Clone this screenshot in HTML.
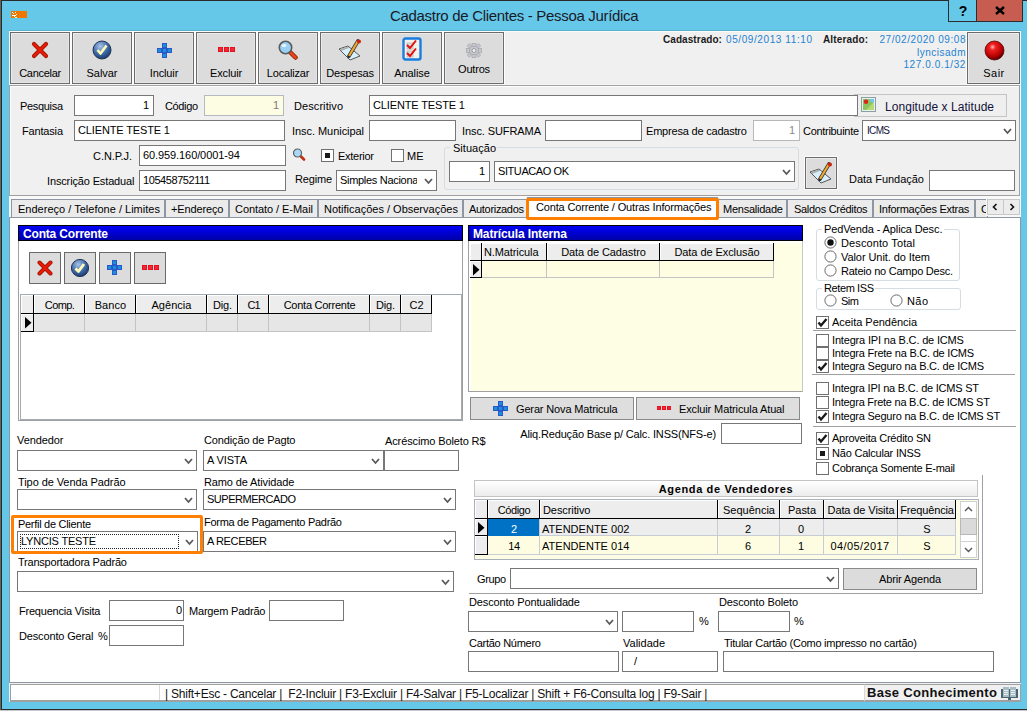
<!DOCTYPE html>
<html><head><meta charset="utf-8"><style>
html,body{margin:0;padding:0;width:1027px;height:711px;overflow:hidden;position:relative;font-family:"Liberation Sans",sans-serif}
body>div{position:absolute;box-sizing:border-box}
.t{position:absolute;white-space:pre}
</style></head><body>
<div style="left:0px;top:0px;width:1027px;height:711px;background:#3a3a3a"></div>
<div style="left:0px;top:0px;width:1px;height:711px;background:#5a6a60"></div>
<div style="left:1px;top:0px;width:1026px;height:710px;background:#2a2a2a"></div>
<div style="left:2px;top:1px;width:1025px;height:708px;background:#65c8e8"></div>
<div style="left:0px;top:710px;width:1027px;height:1px;background:#c8c8c8"></div>
<div style="left:11px;top:11px;width:16px;height:7px;background:#f07800"></div>
<svg style="position:absolute;left:11px;top:11px" width="8" height="8"><g fill="#fff"><rect x="1" y="1" width="1" height="1"/><rect x="2" y="2" width="1" height="1"/><rect x="4" y="1" width="1" height="1"/><rect x="1" y="4" width="2" height="1"/><rect x="3" y="4" width="2" height="1"/><rect x="3" y="5" width="1" height="1"/><rect x="5" y="3" width="1" height="1"/><rect x="4" y="6" width="2" height="1"/></g></svg>
<span id="t1" class="t" style="left:390px;top:7px;font-size:15px;line-height:17px;font-weight:400;color:#1a1a28;font-family:'Liberation Sans';letter-spacing:-0.31px;">Cadastro de Clientes - Pessoa Jurídica</span>
<div style="left:948px;top:0px;width:29px;height:22px;background:#65c8e8;border:1px solid #2c2c2c;border-top:0;box-sizing:border-box"></div>
<div style="left:976px;top:0px;width:47px;height:22px;background:#c75c50;border:1px solid #2c2c2c;border-top:0;box-sizing:border-box"></div>
<span id="t2" class="t" style="left:963px;transform:translateX(-50%);top:3px;font-size:14px;line-height:16px;font-weight:700;color:#000;font-family:'Liberation Sans';">?</span>
<svg style="position:absolute;left:995px;top:6px" width="10" height="9"><path d="M1 1 L9 8 M9 1 L1 8" stroke="#000" stroke-width="2.4"/></svg>
<div style="left:9px;top:30px;width:1012px;height:672px;background:#f0f0f0"></div>
<div style="left:9px;top:30px;width:1012px;height:1px;background:#5bb0cc"></div>
<div style="left:9px;top:31px;width:1012px;height:1px;background:#fbfbfb"></div>
<div style="left:9px;top:31px;width:62px;height:54px;background:#fdfdfd"></div>
<div style="left:10px;top:32px;width:60px;height:52px;background:#dcdcdc;border:1px solid #6b6b6b;box-sizing:border-box;box-shadow:inset 1px 1px 0 #ececec, inset -1px -1px 0 #e6e6e6"></div>
<span id="t3" class="t" style="left:40px;transform:translateX(-50%);top:67px;font-size:11px;line-height:13px;font-weight:400;color:#000;font-family:'Liberation Sans';letter-spacing:-0.29px;">Cancelar</span>
<div style="left:71px;top:31px;width:62px;height:54px;background:#fdfdfd"></div>
<div style="left:72px;top:32px;width:60px;height:52px;background:#dcdcdc;border:1px solid #6b6b6b;box-sizing:border-box;box-shadow:inset 1px 1px 0 #ececec, inset -1px -1px 0 #e6e6e6"></div>
<span id="t4" class="t" style="left:102px;transform:translateX(-50%);top:67px;font-size:11px;line-height:13px;font-weight:400;color:#000;font-family:'Liberation Sans';letter-spacing:-0.04px;">Salvar</span>
<div style="left:133px;top:31px;width:62px;height:54px;background:#fdfdfd"></div>
<div style="left:134px;top:32px;width:60px;height:52px;background:#dcdcdc;border:1px solid #6b6b6b;box-sizing:border-box;box-shadow:inset 1px 1px 0 #ececec, inset -1px -1px 0 #e6e6e6"></div>
<span id="t5" class="t" style="left:164px;transform:translateX(-50%);top:67px;font-size:11px;line-height:13px;font-weight:400;color:#000;font-family:'Liberation Sans';letter-spacing:-0.14px;">Incluir</span>
<div style="left:195px;top:31px;width:62px;height:54px;background:#fdfdfd"></div>
<div style="left:196px;top:32px;width:60px;height:52px;background:#dcdcdc;border:1px solid #6b6b6b;box-sizing:border-box;box-shadow:inset 1px 1px 0 #ececec, inset -1px -1px 0 #e6e6e6"></div>
<span id="t6" class="t" style="left:226px;transform:translateX(-50%);top:67px;font-size:11px;line-height:13px;font-weight:400;color:#000;font-family:'Liberation Sans';letter-spacing:-0.17px;">Excluir</span>
<div style="left:257px;top:31px;width:62px;height:54px;background:#fdfdfd"></div>
<div style="left:258px;top:32px;width:60px;height:52px;background:#dcdcdc;border:1px solid #6b6b6b;box-sizing:border-box;box-shadow:inset 1px 1px 0 #ececec, inset -1px -1px 0 #e6e6e6"></div>
<span id="t7" class="t" style="left:288px;transform:translateX(-50%);top:67px;font-size:11px;line-height:13px;font-weight:400;color:#000;font-family:'Liberation Sans';letter-spacing:-0.18px;">Localizar</span>
<div style="left:319px;top:31px;width:62px;height:54px;background:#fdfdfd"></div>
<div style="left:320px;top:32px;width:60px;height:52px;background:#dcdcdc;border:1px solid #6b6b6b;box-sizing:border-box;box-shadow:inset 1px 1px 0 #ececec, inset -1px -1px 0 #e6e6e6"></div>
<span id="t8" class="t" style="left:350px;transform:translateX(-50%);top:67px;font-size:11px;line-height:13px;font-weight:400;color:#000;font-family:'Liberation Sans';letter-spacing:-0.19px;">Despesas</span>
<div style="left:381px;top:31px;width:62px;height:54px;background:#fdfdfd"></div>
<div style="left:382px;top:32px;width:60px;height:52px;background:#dcdcdc;border:1px solid #6b6b6b;box-sizing:border-box;box-shadow:inset 1px 1px 0 #ececec, inset -1px -1px 0 #e6e6e6"></div>
<span id="t9" class="t" style="left:412px;transform:translateX(-50%);top:67px;font-size:11px;line-height:13px;font-weight:400;color:#000;font-family:'Liberation Sans';letter-spacing:-0.05px;">Analise</span>
<div style="left:443px;top:31px;width:62px;height:54px;background:#fdfdfd"></div>
<div style="left:444px;top:32px;width:60px;height:52px;background:#dcdcdc;border:1px solid #6b6b6b;box-sizing:border-box;box-shadow:inset 1px 1px 0 #ececec, inset -1px -1px 0 #e6e6e6"></div>
<span id="t10" class="t" style="left:474px;transform:translateX(-50%);top:63px;font-size:11px;line-height:13px;font-weight:400;color:#000;font-family:'Liberation Sans';letter-spacing:-0.20px;">Outros</span>
<div style="left:9px;top:84px;width:1012px;height:1px;background:#f6f6f6"></div>
<svg style="position:absolute;left:31px;top:41px" width="18" height="18"><path d="M3 3 L15 15 M15 3 L3 15" stroke="#a01800" stroke-width="4.2" stroke-linecap="round"/><path d="M3 3 L15 15 M15 3 L3 15" stroke="#ee1a08" stroke-width="2.4" stroke-linecap="round"/></svg>
<svg style="position:absolute;left:92px;top:40px" width="20" height="20"><defs><radialGradient id="gch" cx="40%" cy="30%" r="70%"><stop offset="0" stop-color="#a8c4e8"/><stop offset="0.6" stop-color="#3e6aa8"/><stop offset="1" stop-color="#1c3c70"/></radialGradient></defs><circle cx="10" cy="10" r="9" fill="url(#gch)" stroke="#223355" stroke-width="1"/><path d="M5.5 10 L8.5 13.5 L14.5 5.5" stroke="#fffbb8" stroke-width="2.6" fill="none" stroke-linejoin="round"/></svg>
<svg style="position:absolute;left:157px;top:43px" width="15" height="15"><rect x="5.5" y="0.5" width="4" height="4" fill="#1a90dc" stroke="#2a58c8" stroke-width="1"/><rect x="0.5" y="5.5" width="4" height="4" fill="#1a90dc" stroke="#2a58c8" stroke-width="1"/><rect x="5.5" y="5.5" width="4" height="4" fill="#1a90dc" stroke="#2a58c8" stroke-width="1"/><rect x="10.5" y="5.5" width="4" height="4" fill="#1a90dc" stroke="#2a58c8" stroke-width="1"/><rect x="5.5" y="10.5" width="4" height="4" fill="#1a90dc" stroke="#2a58c8" stroke-width="1"/></svg>
<svg style="position:absolute;left:218px;top:47px" width="18" height="5"><rect x="0" y="0" width="5" height="5" fill="#e8101c"/><rect x="1" y="1" width="3" height="3" fill="#f02838"/><rect x="6" y="0" width="5" height="5" fill="#e8101c"/><rect x="7" y="1" width="3" height="3" fill="#f02838"/><rect x="12" y="0" width="5" height="5" fill="#e8101c"/><rect x="13" y="1" width="3" height="3" fill="#f02838"/></svg>
<svg style="position:absolute;left:277px;top:40px" width="22" height="20"><path d="M13.5 12.5 L18.5 17.5" stroke="#8a2000" stroke-width="4.5" stroke-linecap="round"/><path d="M13.5 12.5 L18.5 17.5" stroke="#e84818" stroke-width="2.8" stroke-linecap="round"/><circle cx="8.5" cy="7.5" r="6.2" fill="#9ad0f4" stroke="#5a5a5a" stroke-width="1.6"/><ellipse cx="7" cy="5.5" rx="2.5" ry="1.5" fill="#e8f6ff"/></svg>
<svg style="position:absolute;left:338px;top:39px" width="24" height="22" viewBox="0 0 24 22"><path d="M1 10 L10 7 L22 17 L12 21 Z" fill="#d8f0fc" stroke="#555" stroke-width="1"/><path d="M2 10 L10 7.5 L11 9 L3 12 Z" fill="#b0b0b0"/><path d="M20 2 L11 17" stroke="#333" stroke-width="3.6" stroke-linecap="round"/><path d="M20 2 L11 17" stroke="#f0a830" stroke-width="2.2"/><circle cx="21" cy="2.5" r="2" fill="#d02010"/><path d="M10.5 16.5 L9.5 19.5 L12 17.5Z" fill="#222"/></svg>
<svg style="position:absolute;left:402px;top:37px" width="21" height="25"><rect x="1.5" y="1.5" width="17" height="21" rx="2" fill="#f4f0ec" stroke="#1a7ee0" stroke-width="2.4"/><rect x="5" y="6" width="6" height="6" fill="#ddd" stroke="#aaa" stroke-width="0.6"/><rect x="5" y="14" width="6" height="6" fill="#ddd" stroke="#aaa" stroke-width="0.6"/><path d="M5 8 L8 11 L14 3.5" stroke="#e01010" stroke-width="2" fill="none"/><path d="M5 16 L8 19 L14 11.5" stroke="#e01010" stroke-width="2" fill="none"/></svg>
<svg style="position:absolute;left:466px;top:43px" width="16" height="15"><g fill="#c8c8d0" stroke="#a8a8b0" stroke-width="0.8"><circle cx="8" cy="7.5" r="4.5"/><rect x="6" y="0.5" width="4" height="3"/><rect x="6" y="11.5" width="4" height="3"/><rect x="0.5" y="5.5" width="3" height="4"/><rect x="12.5" y="5.5" width="3" height="4"/><rect x="1.8" y="1.3" width="3" height="3" transform="rotate(45 3.3 2.8)"/><rect x="11" y="1.3" width="3" height="3" transform="rotate(45 12.5 2.8)"/><rect x="1.8" y="10.5" width="3" height="3" transform="rotate(45 3.3 12)"/><rect x="11" y="10.5" width="3" height="3" transform="rotate(45 12.5 12)"/></g><circle cx="8" cy="7.5" r="2" fill="#f0f0f0" stroke="#888" stroke-width="0.8"/></svg>
<span id="t11" class="t" style="left:663px;top:34px;font-size:10px;line-height:12px;font-weight:700;color:#1a1a1a;font-family:'Liberation Sans';letter-spacing:0.06px;">Cadastrado:</span>
<span id="t12" class="t" style="left:726px;top:34px;font-size:10px;line-height:12px;font-weight:400;color:#1e82d2;font-family:'Liberation Sans';letter-spacing:0.59px;">05/09/2013 11:10</span>
<span id="t13" class="t" style="left:823px;top:34px;font-size:10px;line-height:12px;font-weight:700;color:#1a1a1a;font-family:'Liberation Sans';letter-spacing:0.14px;">Alterado:</span>
<span id="t14" class="t" style="right:61px;top:34px;font-size:10px;line-height:12px;font-weight:400;color:#1e82d2;font-family:'Liberation Sans';letter-spacing:0.54px;">27/02/2020 09:08</span>
<span id="t15" class="t" style="right:61px;top:47px;font-size:10px;line-height:12px;font-weight:400;color:#1e82d2;font-family:'Liberation Sans';letter-spacing:0.50px;">lyncisadm</span>
<span id="t16" class="t" style="right:61px;top:59px;font-size:10px;line-height:12px;font-weight:400;color:#1e82d2;font-family:'Liberation Sans';letter-spacing:0.58px;">127.0.0.1/32</span>
<div style="left:966px;top:31px;width:55px;height:54px;background:#fdfdfd"></div>
<div style="left:967px;top:32px;width:53px;height:52px;background:#dcdcdc;border:1px solid #6b6b6b;box-sizing:border-box;box-shadow:inset 1px 1px 0 #ececec, inset -1px -1px 0 #e6e6e6"></div>
<svg style="position:absolute;left:984px;top:40px" width="21" height="21"><defs><radialGradient id="gred" cx="40%" cy="32%" r="65%"><stop offset="0" stop-color="#ffb8b8"/><stop offset="0.25" stop-color="#f02020"/><stop offset="0.8" stop-color="#b00000"/><stop offset="1" stop-color="#600000"/></radialGradient></defs><circle cx="10.5" cy="10.5" r="9.5" fill="url(#gred)" stroke="#500" stroke-width="0.8"/></svg>
<span id="t17" class="t" style="left:994px;transform:translateX(-50%);top:67px;font-size:11px;line-height:13px;font-weight:400;color:#000;font-family:'Liberation Sans';letter-spacing:0.48px;">Sair</span>
<div style="left:9px;top:85px;width:1011px;height:111px;background:#f0f0f0;border-left:1px solid #a0a0a0;border-bottom:1px solid #a0a0a0;border-right:1px solid #a0a0a0;border-top:1px solid #a0a0a0;box-shadow:inset 1px 1px 0 #fff"></div>
<div style="left:1020px;top:85px;width:1px;height:111px;background:#fff"></div>
<span id="t18" class="t" style="left:20px;top:100px;font-size:11px;line-height:13px;font-weight:400;color:#000;font-family:'Liberation Sans';letter-spacing:-0.32px;">Pesquisa</span>
<div style="left:74px;top:95px;width:80px;height:21px;background:#fff;border:1px solid #777777"></div>
<span id="t19" class="t" style="right:878px;top:99px;font-size:11px;line-height:13px;font-weight:400;color:#000;font-family:'Liberation Sans';">1</span>
<span id="t20" class="t" style="left:165px;top:100px;font-size:11px;line-height:13px;font-weight:400;color:#000;font-family:'Liberation Sans';letter-spacing:-0.37px;">Código</span>
<div style="left:204px;top:95px;width:80px;height:21px;background:#fdfde3;border:1px solid #b5bac2"></div>
<span id="t21" class="t" style="right:748px;top:99px;font-size:11px;line-height:13px;font-weight:400;color:#7a7a7a;font-family:'Liberation Sans';">1</span>
<span id="t22" class="t" style="left:294px;top:100px;font-size:11px;line-height:13px;font-weight:400;color:#000;font-family:'Liberation Sans';letter-spacing:0.08px;">Descritivo</span>
<div style="left:854px;top:94px;width:153px;height:23px;background:#efefef;border:1px solid #c4c4c4"></div>
<div style="left:369px;top:95px;width:489px;height:21px;background:#fff;border:1px solid #777777"></div>
<span id="t23" class="t" style="left:373px;top:99px;font-size:11px;line-height:13px;font-weight:400;color:#000;font-family:'Liberation Sans';letter-spacing:-0.14px;">CLIENTE TESTE 1</span>
<svg style="position:absolute;left:861px;top:97px" width="15" height="15"><rect x="0.5" y="0.5" width="14" height="14" fill="#e8f0f0" stroke="#8aa0a0"/><rect x="2" y="2" width="11" height="11" fill="#8cc460"/><path d="M8 2 L13 2 L13 8 Z" fill="#70c8f0"/><path d="M5 13 L13 5 L13 13Z" fill="#b8d870"/><circle cx="5" cy="4.8" r="2.2" fill="#e02020"/></svg>
<span id="t24" class="t" style="left:885px;top:100px;font-size:12px;line-height:14px;font-weight:400;color:#14143c;font-family:'Liberation Sans';letter-spacing:0.05px;">Longitude x Latitude</span>
<span id="t25" class="t" style="left:22px;top:125px;font-size:11px;line-height:13px;font-weight:400;color:#000;font-family:'Liberation Sans';letter-spacing:-0.17px;">Fantasia</span>
<div style="left:74px;top:120px;width:211px;height:21px;background:#fff;border:1px solid #777777"></div>
<span id="t26" class="t" style="left:78px;top:124px;font-size:11px;line-height:13px;font-weight:400;color:#000;font-family:'Liberation Sans';letter-spacing:-0.14px;">CLIENTE TESTE 1</span>
<span id="t27" class="t" style="left:292px;top:125px;font-size:11px;line-height:13px;font-weight:400;color:#000;font-family:'Liberation Sans';letter-spacing:-0.05px;">Insc. Municipal</span>
<div style="left:369px;top:120px;width:87px;height:21px;background:#fff;border:1px solid #777777"></div>
<span id="t28" class="t" style="left:462px;top:125px;font-size:11px;line-height:13px;font-weight:400;color:#000;font-family:'Liberation Sans';letter-spacing:-0.09px;">Insc. SUFRAMA</span>
<div style="left:545px;top:120px;width:97px;height:21px;background:#fff;border:1px solid #777777"></div>
<span id="t29" class="t" style="left:646px;top:125px;font-size:11px;line-height:13px;font-weight:400;color:#000;font-family:'Liberation Sans';letter-spacing:-0.20px;">Empresa de cadastro</span>
<div style="left:753px;top:120px;width:47px;height:21px;background:#fff;border:1px solid #b8b8b8"></div>
<span id="t30" class="t" style="right:232px;top:124px;font-size:11px;line-height:13px;font-weight:400;color:#888;font-family:'Liberation Sans';">1</span>
<span id="t31" class="t" style="left:803px;top:125px;font-size:11px;line-height:13px;font-weight:400;color:#000;font-family:'Liberation Sans';letter-spacing:-0.30px;">Contribuinte</span>
<div style="left:862px;top:120px;width:154px;height:21px;background:#fff;border:1px solid #777777"></div>
<svg style="position:absolute;left:1003px;top:128px" width="9" height="7"><path d="M1 1 L4.5 5 L8 1" stroke="#585858" stroke-width="1.8" fill="none"/></svg>
<span id="t32" class="t" style="left:867px;top:125px;font-size:10px;line-height:12px;font-weight:400;color:#101040;font-family:'Liberation Sans';letter-spacing:-0.67px;">ICMS</span>
<span id="t33" class="t" style="right:895px;top:150px;font-size:11px;line-height:13px;font-weight:400;color:#000;font-family:'Liberation Sans';letter-spacing:-0.08px;">C.N.P.J.</span>
<div style="left:139px;top:145px;width:147px;height:21px;background:#fff;border:1px solid #777777"></div>
<span id="t34" class="t" style="left:143px;top:149px;font-size:11px;line-height:13px;font-weight:400;color:#000;font-family:'Liberation Sans';letter-spacing:-0.09px;">60.959.160/0001-94</span>
<svg style="position:absolute;left:292px;top:148px" width="14" height="13"><path d="M8.5 8 L12 11.5" stroke="#c03010" stroke-width="2.6" stroke-linecap="round"/><circle cx="5.5" cy="5" r="4" fill="#a8d8f8" stroke="#606060" stroke-width="1.2"/></svg>
<div style="left:321px;top:149px;width:13px;height:13px;background:#fff;border:1px solid #707070"></div>
<div style="left:325px;top:153px;width:5px;height:5px;background:#1a1a1a"></div>
<span id="t35" class="t" style="left:338px;top:150px;font-size:11px;line-height:13px;font-weight:400;color:#000;font-family:'Liberation Sans';letter-spacing:-0.27px;">Exterior</span>
<div style="left:391px;top:149px;width:13px;height:13px;background:#fff;border:1px solid #707070"></div>
<span id="t36" class="t" style="left:407px;top:150px;font-size:11px;line-height:13px;font-weight:400;color:#000;font-family:'Liberation Sans';letter-spacing:0.00px;">ME</span>
<div style="left:444px;top:147px;width:355px;height:43px;border:1px solid #d5dde3;border-radius:3px"></div>
<div style="left:450px;top:142px;width:47px;height:13px;background:#f0f0f0"></div>
<span id="t37" class="t" style="left:453px;top:142px;font-size:11px;line-height:13px;font-weight:400;color:#000;font-family:'Liberation Sans';letter-spacing:0.03px;">Situação</span>
<div style="left:449px;top:161px;width:41px;height:21px;background:#fff;border:1px solid #777777"></div>
<span id="t38" class="t" style="right:542px;top:165px;font-size:11px;line-height:13px;font-weight:400;color:#000;font-family:'Liberation Sans';">1</span>
<div style="left:494px;top:161px;width:301px;height:21px;background:#fff;border:1px solid #777777"></div>
<span id="t39" class="t" style="left:498px;top:165px;font-size:11px;line-height:13px;font-weight:400;color:#000;font-family:'Liberation Sans';letter-spacing:-0.42px;">SITUACAO OK</span>
<svg style="position:absolute;left:782px;top:169px" width="9" height="7"><path d="M1 1 L4.5 5 L8 1" stroke="#585858" stroke-width="1.8" fill="none"/></svg>
<div style="left:804px;top:156px;width:34px;height:34px;background:#fdfdfd"></div>
<div style="left:805px;top:157px;width:32px;height:32px;background:#dcdcdc;border:1px solid #6b6b6b;box-sizing:border-box;box-shadow:inset 1px 1px 0 #ececec, inset -1px -1px 0 #e6e6e6"></div>
<svg style="position:absolute;left:809px;top:162px" width="24" height="22" viewBox="0 0 24 22"><path d="M1 10 L10 7 L22 17 L12 21 Z" fill="#d8f0fc" stroke="#555" stroke-width="1"/><path d="M2 10 L10 7.5 L11 9 L3 12 Z" fill="#b0b0b0"/><path d="M20 2 L11 17" stroke="#333" stroke-width="3.6" stroke-linecap="round"/><path d="M20 2 L11 17" stroke="#f0a830" stroke-width="2.2"/><circle cx="21" cy="2.5" r="2" fill="#d02010"/><path d="M10.5 16.5 L9.5 19.5 L12 17.5Z" fill="#222"/></svg>
<span id="t40" class="t" style="left:849px;top:173px;font-size:11px;line-height:13px;font-weight:400;color:#000;font-family:'Liberation Sans';letter-spacing:-0.02px;">Data Fundação</span>
<div style="left:929px;top:170px;width:86px;height:21px;background:#fff;border:1px solid #777777"></div>
<span id="t41" class="t" style="left:47px;top:175px;font-size:11px;line-height:13px;font-weight:400;color:#000;font-family:'Liberation Sans';letter-spacing:-0.14px;">Inscrição Estadual</span>
<div style="left:139px;top:170px;width:147px;height:21px;background:#fff;border:1px solid #777777"></div>
<span id="t42" class="t" style="left:143px;top:174px;font-size:11px;line-height:13px;font-weight:400;color:#000;font-family:'Liberation Sans';letter-spacing:-0.43px;">105458752111</span>
<span id="t43" class="t" style="left:295px;top:173px;font-size:11px;line-height:13px;font-weight:400;color:#000;font-family:'Liberation Sans';letter-spacing:-0.18px;">Regime</span>
<div style="left:336px;top:170px;width:101px;height:21px;background:#fff;border:1px solid #777777"></div>
<svg style="position:absolute;left:424px;top:178px" width="9" height="7"><path d="M1 1 L4.5 5 L8 1" stroke="#585858" stroke-width="1.8" fill="none"/></svg>
<div style="left:337px;top:171px;width:80px;height:19px;overflow:hidden"><span class="t" style="left:3px;top:3px;font-size:11px;line-height:13px;letter-spacing:-0.3px">Simples Nacional</span></div>
<div style="left:9px;top:196px;width:1012px;height:3px;background:#f9f9f9"></div>
<div style="left:9px;top:199px;width:1012px;height:19px;background:#f9f9f9"></div>
<div style="left:9px;top:217px;width:1012px;height:466px;background:#fff;border:1px solid #8e96a2;border-top:1px solid #8e96a2"></div>
<div style="left:11px;top:199px;width:154px;height:19px;background:#ebebeb;border:1px solid #8e96a2"></div>
<span id="t44" class="t" style="left:18px;top:203px;font-size:11px;line-height:13px;font-weight:400;color:#000;font-family:'Liberation Sans';letter-spacing:0.01px;">Endereço / Telefone / Limites</span>
<div style="left:165px;top:199px;width:64px;height:19px;background:#ebebeb;border:1px solid #8e96a2"></div>
<span id="t45" class="t" style="left:171px;top:203px;font-size:11px;line-height:13px;font-weight:400;color:#000;font-family:'Liberation Sans';letter-spacing:-0.13px;">+Endereço</span>
<div style="left:229px;top:199px;width:89px;height:19px;background:#ebebeb;border:1px solid #8e96a2"></div>
<span id="t46" class="t" style="left:235px;top:203px;font-size:11px;line-height:13px;font-weight:400;color:#000;font-family:'Liberation Sans';letter-spacing:-0.06px;">Contato / E-Mail</span>
<div style="left:318px;top:199px;width:145px;height:19px;background:#ebebeb;border:1px solid #8e96a2"></div>
<span id="t47" class="t" style="left:324px;top:203px;font-size:11px;line-height:13px;font-weight:400;color:#000;font-family:'Liberation Sans';letter-spacing:0.00px;">Notificações / Observações</span>
<div style="left:463px;top:199px;width:64px;height:19px;background:#ebebeb;border:1px solid #8e96a2"></div>
<span id="t48" class="t" style="left:469px;top:203px;font-size:11px;line-height:13px;font-weight:400;color:#000;font-family:'Liberation Sans';letter-spacing:-0.31px;">Autorizados</span>
<div style="left:718px;top:199px;width:69px;height:19px;background:#ebebeb;border:1px solid #8e96a2"></div>
<span id="t49" class="t" style="left:723px;top:203px;font-size:11px;line-height:13px;font-weight:400;color:#000;font-family:'Liberation Sans';letter-spacing:-0.24px;">Mensalidade</span>
<div style="left:787px;top:199px;width:86px;height:19px;background:#ebebeb;border:1px solid #8e96a2"></div>
<span id="t50" class="t" style="left:794px;top:203px;font-size:11px;line-height:13px;font-weight:400;color:#000;font-family:'Liberation Sans';letter-spacing:-0.29px;">Saldos Créditos</span>
<div style="left:873px;top:199px;width:102px;height:19px;background:#ebebeb;border:1px solid #8e96a2"></div>
<span id="t51" class="t" style="left:879px;top:203px;font-size:11px;line-height:13px;font-weight:400;color:#000;font-family:'Liberation Sans';letter-spacing:-0.26px;">Informações Extras</span>
<div style="left:975px;top:199px;width:13px;height:19px;background:#ebebeb;border:1px solid #8e96a2"></div>
<span id="t52" class="t" style="left:981px;top:203px;font-size:11px;line-height:13px;font-weight:400;color:#000;font-family:'Liberation Sans';">C</span>
<div style="left:527px;top:197px;width:191px;height:21px;background:#fff;border:1px solid #8e96a2;border-bottom:0"></div>
<span id="t53" class="t" style="left:536px;top:201px;font-size:11px;line-height:13px;font-weight:400;color:#000;font-family:'Liberation Sans';letter-spacing:-0.16px;">Conta Corrente / Outras Informações</span>
<div style="left:526px;top:198px;width:193px;height:22px;border:3px solid #ff7f00;border-radius:2px"></div>
<div style="left:986px;top:198px;width:35px;height:18px;background:#f9f9f9"></div>
<div style="left:987px;top:199px;width:17px;height:16px;background:#ececec;border:1px solid #c8c8c8"></div>
<div style="left:1003px;top:199px;width:17px;height:16px;background:#ececec;border:1px solid #c8c8c8"></div>
<svg style="position:absolute;left:992px;top:203px" width="6" height="8"><path d="M4.5 1 L1.5 4 L4.5 7" stroke="#111" stroke-width="1.6" fill="none"/></svg>
<svg style="position:absolute;left:1009px;top:203px" width="6" height="8"><path d="M1.5 1 L4.5 4 L1.5 7" stroke="#111" stroke-width="1.6" fill="none"/></svg>
<div style="left:18px;top:225px;width:445px;height:16px;background:linear-gradient(#0000f8,#0000a8);border:1px solid #000"></div>
<span id="t54" class="t" style="left:23px;top:227px;font-size:12px;line-height:14px;font-weight:700;color:#fff;font-family:'Liberation Sans';letter-spacing:-0.18px;">Conta Corrente</span>
<div style="left:18px;top:241px;width:445px;height:180px;border-left:1px solid #a0a0a0;border-bottom:1px solid #a0a0a0;border-right:1px solid #a0a0a0;background:#fff"></div>
<div style="left:29px;top:252px;width:32px;height:32px;background:#dcdcdc;border:1px solid #6a6a6a"></div>
<div style="left:64px;top:252px;width:32px;height:32px;background:#dcdcdc;border:1px solid #6a6a6a"></div>
<div style="left:99px;top:252px;width:32px;height:32px;background:#dcdcdc;border:1px solid #6a6a6a"></div>
<div style="left:134px;top:252px;width:32px;height:32px;background:#dcdcdc;border:1px solid #6a6a6a"></div>
<svg style="position:absolute;left:37px;top:260px" width="16" height="16"><path d="M2.5 2.5 L13.5 13.5 M13.5 2.5 L2.5 13.5" stroke="#a01800" stroke-width="4" stroke-linecap="round"/><path d="M2.5 2.5 L13.5 13.5 M13.5 2.5 L2.5 13.5" stroke="#ee1a08" stroke-width="2.3" stroke-linecap="round"/></svg>
<svg style="position:absolute;left:70px;top:258px" width="20" height="20"><defs><radialGradient id="gch2" cx="40%" cy="30%" r="70%"><stop offset="0" stop-color="#a8c4e8"/><stop offset="0.6" stop-color="#3e6aa8"/><stop offset="1" stop-color="#1c3c70"/></radialGradient></defs><circle cx="10" cy="10" r="8.6" fill="url(#gch2)" stroke="#223355" stroke-width="1"/><path d="M5.5 10.5 L8.5 13.5 L14 6" stroke="#fffbb8" stroke-width="2.8" fill="none" stroke-linejoin="round"/></svg>
<svg style="position:absolute;left:107px;top:260px" width="15" height="15"><rect x="5.5" y="0.5" width="4" height="4" fill="#1a90dc" stroke="#2a58c8" stroke-width="1"/><rect x="0.5" y="5.5" width="4" height="4" fill="#1a90dc" stroke="#2a58c8" stroke-width="1"/><rect x="5.5" y="5.5" width="4" height="4" fill="#1a90dc" stroke="#2a58c8" stroke-width="1"/><rect x="10.5" y="5.5" width="4" height="4" fill="#1a90dc" stroke="#2a58c8" stroke-width="1"/><rect x="5.5" y="10.5" width="4" height="4" fill="#1a90dc" stroke="#2a58c8" stroke-width="1"/></svg>
<svg style="position:absolute;left:142px;top:265px" width="18" height="5"><rect x="0" y="0" width="5" height="5" fill="#e8101c"/><rect x="1" y="1" width="3" height="3" fill="#f02838"/><rect x="6" y="0" width="5" height="5" fill="#e8101c"/><rect x="7" y="1" width="3" height="3" fill="#f02838"/><rect x="12" y="0" width="5" height="5" fill="#e8101c"/><rect x="13" y="1" width="3" height="3" fill="#f02838"/></svg>
<div style="left:20px;top:294px;width:442px;height:126px;border:1px solid #a4aab2;background:#fff"></div>
<div style="left:21px;top:295px;width:13px;height:19px;background:#ededed;border-right:1px solid #000;border-bottom:1px solid #000;box-shadow:inset 1px 1px 0 #fff"></div>
<div style="left:34px;top:295px;width:51px;height:19px;background:#ededed;border-right:1px solid #000;border-bottom:1px solid #000;box-shadow:inset 1px 1px 0 #fff"></div>
<span id="t55" class="t" style="left:59.5px;transform:translateX(-50%);top:299px;font-size:11px;line-height:13px;font-weight:400;color:#000;font-family:'Liberation Sans';letter-spacing:-0.60px;">Comp.</span>
<div style="left:85px;top:295px;width:51px;height:19px;background:#ededed;border-right:1px solid #000;border-bottom:1px solid #000;box-shadow:inset 1px 1px 0 #fff"></div>
<span id="t56" class="t" style="left:110.5px;transform:translateX(-50%);top:299px;font-size:11px;line-height:13px;font-weight:400;color:#000;font-family:'Liberation Sans';letter-spacing:0.10px;">Banco</span>
<div style="left:136px;top:295px;width:71px;height:19px;background:#ededed;border-right:1px solid #000;border-bottom:1px solid #000;box-shadow:inset 1px 1px 0 #fff"></div>
<span id="t57" class="t" style="left:171.5px;transform:translateX(-50%);top:299px;font-size:11px;line-height:13px;font-weight:400;color:#000;font-family:'Liberation Sans';letter-spacing:0.04px;">Agência</span>
<div style="left:207px;top:295px;width:31px;height:19px;background:#ededed;border-right:1px solid #000;border-bottom:1px solid #000;box-shadow:inset 1px 1px 0 #fff"></div>
<span id="t58" class="t" style="left:222.5px;transform:translateX(-50%);top:299px;font-size:11px;line-height:13px;font-weight:400;color:#000;font-family:'Liberation Sans';letter-spacing:-0.19px;">Dig.</span>
<div style="left:238px;top:295px;width:31px;height:19px;background:#ededed;border-right:1px solid #000;border-bottom:1px solid #000;box-shadow:inset 1px 1px 0 #fff"></div>
<span id="t59" class="t" style="left:253.5px;transform:translateX(-50%);top:299px;font-size:11px;line-height:13px;font-weight:400;color:#000;font-family:'Liberation Sans';letter-spacing:-1.06px;">C1</span>
<div style="left:269px;top:295px;width:101px;height:19px;background:#ededed;border-right:1px solid #000;border-bottom:1px solid #000;box-shadow:inset 1px 1px 0 #fff"></div>
<span id="t60" class="t" style="left:319.5px;transform:translateX(-50%);top:299px;font-size:11px;line-height:13px;font-weight:400;color:#000;font-family:'Liberation Sans';letter-spacing:-0.25px;">Conta Corrente</span>
<div style="left:370px;top:295px;width:31px;height:19px;background:#ededed;border-right:1px solid #000;border-bottom:1px solid #000;box-shadow:inset 1px 1px 0 #fff"></div>
<span id="t61" class="t" style="left:385.5px;transform:translateX(-50%);top:299px;font-size:11px;line-height:13px;font-weight:400;color:#000;font-family:'Liberation Sans';letter-spacing:-0.19px;">Dig.</span>
<div style="left:401px;top:295px;width:31px;height:19px;background:#ededed;border-right:1px solid #000;border-bottom:1px solid #000;box-shadow:inset 1px 1px 0 #fff"></div>
<span id="t62" class="t" style="left:416.5px;transform:translateX(-50%);top:299px;font-size:11px;line-height:13px;font-weight:400;color:#000;font-family:'Liberation Sans';letter-spacing:-0.06px;">C2</span>
<div style="left:34px;top:314px;width:398px;height:18px;background:#e6e6e6;border-bottom:1px solid #c4c4c4"></div>
<div style="left:84px;top:314px;width:1px;height:18px;background:#c4c4c4"></div>
<div style="left:135px;top:314px;width:1px;height:18px;background:#c4c4c4"></div>
<div style="left:206px;top:314px;width:1px;height:18px;background:#c4c4c4"></div>
<div style="left:237px;top:314px;width:1px;height:18px;background:#c4c4c4"></div>
<div style="left:268px;top:314px;width:1px;height:18px;background:#c4c4c4"></div>
<div style="left:369px;top:314px;width:1px;height:18px;background:#c4c4c4"></div>
<div style="left:400px;top:314px;width:1px;height:18px;background:#c4c4c4"></div>
<div style="left:431px;top:314px;width:1px;height:18px;background:#c4c4c4"></div>
<div style="left:21px;top:314px;width:13px;height:18px;background:#ededed;border-right:1px solid #000;border-bottom:1px solid #000;box-shadow:inset 1px 1px 0 #fff"></div>
<svg style="position:absolute;left:25px;top:317px" width="7" height="12"><path d="M0 0 L6.5 5.8 L0 11.5Z" fill="#000"/></svg>
<div style="left:468px;top:225px;width:335px;height:16px;background:linear-gradient(#0000f8,#0000a8);border:1px solid #000"></div>
<span id="t63" class="t" style="left:473px;top:227px;font-size:12px;line-height:14px;font-weight:700;color:#fff;font-family:'Liberation Sans';letter-spacing:-0.13px;">Matrícula Interna</span>
<div style="left:468px;top:241px;width:335px;height:151px;background:#fefee4;border-left:1px solid #a0a0a0;border-bottom:1px solid #a0a0a0;border-right:1px solid #c8c8c8;box-shadow:inset 1px 1px 0 #fff, inset 2px 2px 0 #fff"></div>
<div style="left:470px;top:243px;width:12px;height:18px;background:#ededed;border-right:1px solid #000;border-bottom:1px solid #000;box-shadow:inset 1px 1px 0 #fff"></div>
<div style="left:482px;top:243px;width:65px;height:18px;background:#ededed;border-right:1px solid #000;border-bottom:1px solid #000;box-shadow:inset 1px 1px 0 #fff"></div>
<span id="t64" class="t" style="left:484px;top:246px;font-size:11px;line-height:13px;font-weight:400;color:#000;font-family:'Liberation Sans';letter-spacing:-0.11px;">N.Matricula</span>
<div style="left:547px;top:243px;width:113px;height:18px;background:#ededed;border-right:1px solid #000;border-bottom:1px solid #000;box-shadow:inset 1px 1px 0 #fff"></div>
<span id="t65" class="t" style="left:603.5px;transform:translateX(-50%);top:246px;font-size:11px;line-height:13px;font-weight:400;color:#000;font-family:'Liberation Sans';letter-spacing:-0.11px;">Data de Cadastro</span>
<div style="left:660px;top:243px;width:114px;height:18px;background:#ededed;border-right:1px solid #000;border-bottom:1px solid #000;box-shadow:inset 1px 1px 0 #fff"></div>
<span id="t66" class="t" style="left:717.0px;transform:translateX(-50%);top:246px;font-size:11px;line-height:13px;font-weight:400;color:#000;font-family:'Liberation Sans';letter-spacing:-0.07px;">Data de Exclusão</span>
<div style="left:482px;top:261px;width:292px;height:17px;background:#fefde2;border-bottom:1px solid #c4c4c4"></div>
<div style="left:546px;top:261px;width:1px;height:17px;background:#c4c4c4"></div>
<div style="left:659px;top:261px;width:1px;height:17px;background:#c4c4c4"></div>
<div style="left:773px;top:261px;width:1px;height:17px;background:#c4c4c4"></div>
<div style="left:470px;top:261px;width:12px;height:17px;background:#ededed;border-right:1px solid #000;border-bottom:1px solid #000;box-shadow:inset 1px 1px 0 #fff"></div>
<svg style="position:absolute;left:473px;top:264px" width="7" height="12"><path d="M0 0 L6.5 5.8 L0 11.5Z" fill="#000"/></svg>
<div style="left:470px;top:397px;width:164px;height:23px;background:#dedede;border:1px solid #8a8a8a"></div>
<div style="left:636px;top:397px;width:164px;height:23px;background:#dedede;border:1px solid #8a8a8a"></div>
<svg style="position:absolute;left:493px;top:401px" width="15" height="15"><rect x="5.5" y="0.5" width="4" height="4" fill="#1a90dc" stroke="#2a58c8" stroke-width="1"/><rect x="0.5" y="5.5" width="4" height="4" fill="#1a90dc" stroke="#2a58c8" stroke-width="1"/><rect x="5.5" y="5.5" width="4" height="4" fill="#1a90dc" stroke="#2a58c8" stroke-width="1"/><rect x="10.5" y="5.5" width="4" height="4" fill="#1a90dc" stroke="#2a58c8" stroke-width="1"/><rect x="5.5" y="10.5" width="4" height="4" fill="#1a90dc" stroke="#2a58c8" stroke-width="1"/></svg>
<span id="t67" class="t" style="left:516px;top:403px;font-size:11px;line-height:13px;font-weight:400;color:#000;font-family:'Liberation Sans';letter-spacing:-0.15px;">Gerar Nova Matricula</span>
<svg style="position:absolute;left:657px;top:406px" width="15" height="4"><rect x="0" y="0" width="4" height="4" fill="#e8101c"/><rect x="1" y="1" width="2" height="2" fill="#f02838"/><rect x="5" y="0" width="4" height="4" fill="#e8101c"/><rect x="6" y="1" width="2" height="2" fill="#f02838"/><rect x="10" y="0" width="4" height="4" fill="#e8101c"/><rect x="11" y="1" width="2" height="2" fill="#f02838"/></svg>
<span id="t68" class="t" style="left:679px;top:403px;font-size:11px;line-height:13px;font-weight:400;color:#000;font-family:'Liberation Sans';letter-spacing:-0.12px;">Excluir Matricula Atual</span>
<span id="t69" class="t" style="right:311px;top:428px;font-size:11px;line-height:13px;font-weight:400;color:#000;font-family:'Liberation Sans';letter-spacing:-0.16px;">Aliq.Redução Base p/ Calc. INSS(NFS-e)</span>
<div style="left:721px;top:423px;width:81px;height:21px;background:#fff;border:1px solid #777777"></div>
<span id="t70" class="t" style="left:17px;top:434px;font-size:11px;line-height:13px;font-weight:400;color:#000;font-family:'Liberation Sans';letter-spacing:-0.09px;">Vendedor</span>
<div style="left:17px;top:450px;width:180px;height:21px;background:#fff;border:1px solid #777777"></div>
<svg style="position:absolute;left:184px;top:458px" width="9" height="7"><path d="M1 1 L4.5 5 L8 1" stroke="#585858" stroke-width="1.8" fill="none"/></svg>
<span id="t71" class="t" style="left:204px;top:434px;font-size:11px;line-height:13px;font-weight:400;color:#000;font-family:'Liberation Sans';letter-spacing:-0.13px;">Condição de Pagto</span>
<div style="left:203px;top:450px;width:181px;height:21px;background:#fff;border:1px solid #777777"></div>
<span id="t72" class="t" style="left:207px;top:454px;font-size:11px;line-height:13px;font-weight:400;color:#000;font-family:'Liberation Sans';letter-spacing:-0.13px;">A VISTA</span>
<svg style="position:absolute;left:371px;top:458px" width="9" height="7"><path d="M1 1 L4.5 5 L8 1" stroke="#585858" stroke-width="1.8" fill="none"/></svg>
<span id="t73" class="t" style="left:385px;top:435px;font-size:11px;line-height:13px;font-weight:400;color:#000;font-family:'Liberation Sans';letter-spacing:-0.12px;">Acréscimo Boleto R$</span>
<div style="left:384px;top:450px;width:75px;height:21px;background:#fff;border:1px solid #777777"></div>
<span id="t74" class="t" style="left:18px;top:476px;font-size:11px;line-height:13px;font-weight:400;color:#000;font-family:'Liberation Sans';letter-spacing:-0.08px;">Tipo de Venda Padrão</span>
<div style="left:17px;top:489px;width:180px;height:21px;background:#fff;border:1px solid #777777"></div>
<svg style="position:absolute;left:184px;top:497px" width="9" height="7"><path d="M1 1 L4.5 5 L8 1" stroke="#585858" stroke-width="1.8" fill="none"/></svg>
<span id="t75" class="t" style="left:204px;top:476px;font-size:11px;line-height:13px;font-weight:400;color:#000;font-family:'Liberation Sans';letter-spacing:-0.12px;">Ramo de Atividade</span>
<div style="left:203px;top:489px;width:253px;height:21px;background:#fff;border:1px solid #777777"></div>
<span id="t76" class="t" style="left:207px;top:493px;font-size:11px;line-height:13px;font-weight:400;color:#000;font-family:'Liberation Sans';letter-spacing:-0.47px;">SUPERMERCADO</span>
<svg style="position:absolute;left:443px;top:497px" width="9" height="7"><path d="M1 1 L4.5 5 L8 1" stroke="#585858" stroke-width="1.8" fill="none"/></svg>
<span id="t77" class="t" style="left:18px;top:518px;font-size:11px;line-height:13px;font-weight:400;color:#000;font-family:'Liberation Sans';letter-spacing:-0.29px;">Perfil de Cliente</span>
<div style="left:17px;top:531px;width:181px;height:21px;background:#fff;border:1px solid #777777"></div>
<svg style="position:absolute;left:185px;top:539px" width="9" height="7"><path d="M1 1 L4.5 5 L8 1" stroke="#585858" stroke-width="1.8" fill="none"/></svg>
<div style="left:20px;top:534px;width:159px;height:15px;border:1px dotted #222"></div>
<span id="t78" class="t" style="left:21px;top:535px;font-size:11px;line-height:13px;font-weight:400;color:#000;font-family:'Liberation Sans';letter-spacing:-0.20px;">LYNCIS TESTE</span>
<span id="t79" class="t" style="left:204px;top:516px;font-size:11px;line-height:13px;font-weight:400;color:#000;font-family:'Liberation Sans';letter-spacing:-0.29px;">Forma de Pagamento Padrão</span>
<div style="left:203px;top:531px;width:253px;height:21px;background:#fff;border:1px solid #777777"></div>
<span id="t80" class="t" style="left:207px;top:535px;font-size:11px;line-height:13px;font-weight:400;color:#000;font-family:'Liberation Sans';letter-spacing:-0.37px;">A RECEBER</span>
<svg style="position:absolute;left:443px;top:539px" width="9" height="7"><path d="M1 1 L4.5 5 L8 1" stroke="#585858" stroke-width="1.8" fill="none"/></svg>
<div style="left:11px;top:515px;width:192px;height:39px;border:3px solid #ff7f00;border-radius:2px"></div>
<span id="t81" class="t" style="left:18px;top:556px;font-size:11px;line-height:13px;font-weight:400;color:#000;font-family:'Liberation Sans';letter-spacing:-0.22px;">Transportadora Padrão</span>
<div style="left:17px;top:571px;width:437px;height:21px;background:#fff;border:1px solid #777777"></div>
<svg style="position:absolute;left:441px;top:579px" width="9" height="7"><path d="M1 1 L4.5 5 L8 1" stroke="#585858" stroke-width="1.8" fill="none"/></svg>
<span id="t82" class="t" style="left:19px;top:605px;font-size:11px;line-height:13px;font-weight:400;color:#000;font-family:'Liberation Sans';letter-spacing:-0.21px;">Frequencia Visita</span>
<div style="left:109px;top:600px;width:75px;height:21px;background:#fff;border:1px solid #777777"></div>
<span id="t83" class="t" style="right:845px;top:604px;font-size:11px;line-height:13px;font-weight:400;color:#000;font-family:'Liberation Sans';">0</span>
<span id="t84" class="t" style="left:189px;top:605px;font-size:11px;line-height:13px;font-weight:400;color:#000;font-family:'Liberation Sans';letter-spacing:-0.20px;">Margem Padrão</span>
<div style="left:269px;top:600px;width:75px;height:21px;background:#fff;border:1px solid #777777"></div>
<span id="t85" class="t" style="left:19px;top:630px;font-size:11px;line-height:13px;font-weight:400;color:#000;font-family:'Liberation Sans';letter-spacing:-0.15px;">Desconto Geral</span>
<span id="t86" class="t" style="left:98px;top:630px;font-size:11px;line-height:13px;font-weight:400;color:#000;font-family:'Liberation Sans';">%</span>
<div style="left:109px;top:625px;width:75px;height:21px;background:#fff;border:1px solid #777777"></div>
<div style="left:982px;top:475px;width:1px;height:119px;background:#a0a0a0"></div>
<div style="left:469px;top:593px;width:514px;height:1px;background:#a0a0a0"></div>
<div style="left:474px;top:480px;width:504px;height:17px;background:linear-gradient(#ffffff,#ececec);border:1px solid #c4c4c4"></div>
<span id="t87" class="t" style="left:726px;transform:translateX(-50%);top:483px;font-size:11px;line-height:13px;font-weight:700;color:#000;font-family:'Liberation Sans';letter-spacing:0.65px;">Agenda de Vendedores</span>
<div style="left:474px;top:499px;width:505px;height:61px;background:#fdfde6;border:1px solid #a8b0bc"></div>
<div style="left:475px;top:500px;width:13px;height:19px;background:#ededed;border-right:1px solid #000;border-bottom:1px solid #000;box-shadow:inset 1px 1px 0 #fff"></div>
<div style="left:488px;top:500px;width:52px;height:19px;background:#ededed;border-right:1px solid #000;border-bottom:1px solid #000;box-shadow:inset 1px 1px 0 #fff"></div>
<span id="t88" class="t" style="left:514.0px;transform:translateX(-50%);top:504px;font-size:11px;line-height:13px;font-weight:400;color:#000;font-family:'Liberation Sans';letter-spacing:-0.37px;">Código</span>
<div style="left:540px;top:500px;width:178px;height:19px;background:#ededed;border-right:1px solid #000;border-bottom:1px solid #000;box-shadow:inset 1px 1px 0 #fff"></div>
<span id="t89" class="t" style="left:543px;top:504px;font-size:11px;line-height:13px;font-weight:400;color:#000;font-family:'Liberation Sans';letter-spacing:-0.09px;">Descritivo</span>
<div style="left:718px;top:500px;width:62px;height:19px;background:#ededed;border-right:1px solid #000;border-bottom:1px solid #000;box-shadow:inset 1px 1px 0 #fff"></div>
<span id="t90" class="t" style="left:749.0px;transform:translateX(-50%);top:504px;font-size:11px;line-height:13px;font-weight:400;color:#000;font-family:'Liberation Sans';letter-spacing:0.00px;">Sequência</span>
<div style="left:780px;top:500px;width:44px;height:19px;background:#ededed;border-right:1px solid #000;border-bottom:1px solid #000;box-shadow:inset 1px 1px 0 #fff"></div>
<span id="t91" class="t" style="left:802.0px;transform:translateX(-50%);top:504px;font-size:11px;line-height:13px;font-weight:400;color:#000;font-family:'Liberation Sans';letter-spacing:-0.04px;">Pasta</span>
<div style="left:824px;top:500px;width:74px;height:19px;background:#ededed;border-right:1px solid #000;border-bottom:1px solid #000;box-shadow:inset 1px 1px 0 #fff"></div>
<span id="t92" class="t" style="left:861.0px;transform:translateX(-50%);top:504px;font-size:11px;line-height:13px;font-weight:400;color:#000;font-family:'Liberation Sans';letter-spacing:-0.10px;">Data de Visita</span>
<div style="left:898px;top:500px;width:58px;height:19px;background:#ededed;border-right:1px solid #000;border-bottom:1px solid #000;box-shadow:inset 1px 1px 0 #fff"></div>
<span id="t93" class="t" style="left:927.0px;transform:translateX(-50%);top:504px;font-size:11px;line-height:13px;font-weight:400;color:#000;font-family:'Liberation Sans';letter-spacing:-0.16px;">Frequência</span>
<div style="left:488px;top:519px;width:468px;height:17px;background:#ededed;border-bottom:1px solid #c8ccd4"></div>
<div style="left:488px;top:519px;width:52px;height:17px;background:#0072c6"></div>
<div style="left:488px;top:536px;width:468px;height:19px;background:#fefde2;border-bottom:1px solid #c8ccd4"></div>
<div style="left:539px;top:519px;width:1px;height:36px;background:#c8ccd4"></div>
<div style="left:717px;top:519px;width:1px;height:36px;background:#c8ccd4"></div>
<div style="left:779px;top:519px;width:1px;height:36px;background:#c8ccd4"></div>
<div style="left:823px;top:519px;width:1px;height:36px;background:#c8ccd4"></div>
<div style="left:897px;top:519px;width:1px;height:36px;background:#c8ccd4"></div>
<div style="left:955px;top:519px;width:1px;height:36px;background:#c8ccd4"></div>
<div style="left:475px;top:519px;width:13px;height:17px;background:#ededed;border-right:1px solid #000;border-bottom:1px solid #000;box-shadow:inset 1px 1px 0 #fff"></div>
<div style="left:475px;top:536px;width:13px;height:19px;background:#ededed;border-right:1px solid #000;border-bottom:1px solid #000;box-shadow:inset 1px 1px 0 #fff"></div>
<svg style="position:absolute;left:478px;top:522px" width="7" height="12"><path d="M0 0 L6.5 5.8 L0 11.5Z" fill="#000"/></svg>
<span id="t94" class="t" style="left:514px;transform:translateX(-50%);top:523px;font-size:11px;line-height:13px;font-weight:400;color:#fff;font-family:'Liberation Sans';">2</span>
<span id="t95" class="t" style="left:542px;top:523px;font-size:11px;line-height:13px;font-weight:400;color:#000;font-family:'Liberation Sans';letter-spacing:0.02px;">ATENDENTE 002</span>
<span id="t96" class="t" style="left:748px;transform:translateX(-50%);top:523px;font-size:11px;line-height:13px;font-weight:400;color:#000;font-family:'Liberation Sans';">2</span>
<span id="t97" class="t" style="left:801px;transform:translateX(-50%);top:523px;font-size:11px;line-height:13px;font-weight:400;color:#000;font-family:'Liberation Sans';">0</span>
<span id="t98" class="t" style="left:927px;transform:translateX(-50%);top:523px;font-size:11px;line-height:13px;font-weight:400;color:#000;font-family:'Liberation Sans';">S</span>
<span id="t99" class="t" style="left:514px;transform:translateX(-50%);top:540px;font-size:11px;line-height:13px;font-weight:400;color:#000;font-family:'Liberation Sans';letter-spacing:-0.25px;">14</span>
<span id="t100" class="t" style="left:542px;top:540px;font-size:11px;line-height:13px;font-weight:400;color:#000;font-family:'Liberation Sans';letter-spacing:0.02px;">ATENDENTE 014</span>
<span id="t101" class="t" style="left:748px;transform:translateX(-50%);top:540px;font-size:11px;line-height:13px;font-weight:400;color:#000;font-family:'Liberation Sans';">6</span>
<span id="t102" class="t" style="left:801px;transform:translateX(-50%);top:540px;font-size:11px;line-height:13px;font-weight:400;color:#000;font-family:'Liberation Sans';">1</span>
<span id="t103" class="t" style="left:860px;transform:translateX(-50%);top:540px;font-size:11px;line-height:13px;font-weight:400;color:#000;font-family:'Liberation Sans';letter-spacing:0.40px;">04/05/2017</span>
<span id="t104" class="t" style="left:927px;transform:translateX(-50%);top:540px;font-size:11px;line-height:13px;font-weight:400;color:#000;font-family:'Liberation Sans';">S</span>
<div style="left:960px;top:501px;width:17px;height:57px;background:#fff;border:1px solid #d0d0d0"></div>
<div style="left:960px;top:518px;width:17px;height:17px;background:#dadada;border:1px solid #b8b8b8"></div>
<div style="left:960px;top:541px;width:17px;height:17px;background:#fff;border:1px solid #d0d0d0"></div>
<svg style="position:absolute;left:964px;top:506px" width="9" height="6"><path d="M1 5 L4.5 1.5 L8 5" stroke="#555" stroke-width="1.4" fill="none"/></svg>
<svg style="position:absolute;left:964px;top:547px" width="9" height="6"><path d="M1 1 L4.5 4.5 L8 1" stroke="#555" stroke-width="1.4" fill="none"/></svg>
<span id="t105" class="t" style="left:477px;top:573px;font-size:11px;line-height:13px;font-weight:400;color:#000;font-family:'Liberation Sans';letter-spacing:-0.39px;">Grupo</span>
<div style="left:510px;top:568px;width:329px;height:21px;background:#fff;border:1px solid #777777"></div>
<svg style="position:absolute;left:826px;top:576px" width="9" height="7"><path d="M1 1 L4.5 5 L8 1" stroke="#585858" stroke-width="1.8" fill="none"/></svg>
<div style="left:843px;top:568px;width:134px;height:22px;background:#dcdcdc;border:1px solid #8a8a8a"></div>
<span id="t106" class="t" style="left:910px;transform:translateX(-50%);top:573px;font-size:11px;line-height:13px;font-weight:400;color:#000;font-family:'Liberation Sans';letter-spacing:-0.15px;">Abrir Agenda</span>
<span id="t107" class="t" style="left:469px;top:596px;font-size:11px;line-height:13px;font-weight:400;color:#000;font-family:'Liberation Sans';letter-spacing:-0.14px;">Desconto Pontualidade</span>
<div style="left:468px;top:611px;width:150px;height:21px;background:#fff;border:1px solid #777777"></div>
<svg style="position:absolute;left:605px;top:619px" width="9" height="7"><path d="M1 1 L4.5 5 L8 1" stroke="#585858" stroke-width="1.8" fill="none"/></svg>
<div style="left:622px;top:611px;width:72px;height:21px;background:#fff;border:1px solid #777777"></div>
<span id="t108" class="t" style="left:699px;top:615px;font-size:11px;line-height:13px;font-weight:400;color:#000;font-family:'Liberation Sans';">%</span>
<span id="t109" class="t" style="left:719px;top:596px;font-size:11px;line-height:13px;font-weight:400;color:#000;font-family:'Liberation Sans';letter-spacing:-0.12px;">Desconto Boleto</span>
<div style="left:718px;top:611px;width:72px;height:21px;background:#fff;border:1px solid #777777"></div>
<span id="t110" class="t" style="left:794px;top:615px;font-size:11px;line-height:13px;font-weight:400;color:#000;font-family:'Liberation Sans';">%</span>
<span id="t111" class="t" style="left:469px;top:637px;font-size:11px;line-height:13px;font-weight:400;color:#000;font-family:'Liberation Sans';letter-spacing:-0.27px;">Cartão Número</span>
<div style="left:468px;top:651px;width:151px;height:21px;background:#fff;border:1px solid #777777"></div>
<span id="t112" class="t" style="left:623px;top:637px;font-size:11px;line-height:13px;font-weight:400;color:#000;font-family:'Liberation Sans';letter-spacing:0.00px;">Validade</span>
<div style="left:622px;top:651px;width:96px;height:21px;background:#fff;border:1px solid #777777"></div>
<span id="t113" class="t" style="left:634px;top:655px;font-size:11px;line-height:13px;font-weight:400;color:#000;font-family:'Liberation Sans';">/</span>
<span id="t114" class="t" style="left:724px;top:637px;font-size:11px;line-height:13px;font-weight:400;color:#000;font-family:'Liberation Sans';letter-spacing:-0.25px;">Titular Cartão (Como impresso no cartão)</span>
<div style="left:723px;top:651px;width:271px;height:21px;background:#fff;border:1px solid #777777"></div>
<div style="left:816px;top:229px;width:144px;height:52px;border:1px solid #d5dde3;border-radius:3px"></div>
<div style="left:822px;top:222px;width:122px;height:13px;background:#fff"></div>
<span id="t115" class="t" style="left:824px;top:223px;font-size:11px;line-height:13px;font-weight:400;color:#000;font-family:'Liberation Sans';letter-spacing:-0.12px;">PedVenda - Aplica Desc.</span>
<svg style="position:absolute;left:824px;top:236px" width="13" height="13"><circle cx="6.5" cy="6.5" r="5.6" fill="#fff" stroke="#6a6a6a" stroke-width="1"/><circle cx="6.5" cy="6.5" r="3.2" fill="#111"/></svg>
<span id="t116" class="t" style="left:841px;top:237px;font-size:11px;line-height:13px;font-weight:400;color:#000;font-family:'Liberation Sans';letter-spacing:0.11px;">Desconto Total</span>
<svg style="position:absolute;left:824px;top:250px" width="13" height="13"><circle cx="6.5" cy="6.5" r="5.6" fill="#fff" stroke="#6a6a6a" stroke-width="1"/></svg>
<span id="t117" class="t" style="left:841px;top:251px;font-size:11px;line-height:13px;font-weight:400;color:#000;font-family:'Liberation Sans';letter-spacing:-0.07px;">Valor Unit. do Item</span>
<svg style="position:absolute;left:824px;top:264px" width="13" height="13"><circle cx="6.5" cy="6.5" r="5.6" fill="#fff" stroke="#6a6a6a" stroke-width="1"/></svg>
<span id="t118" class="t" style="left:841px;top:265px;font-size:11px;line-height:13px;font-weight:400;color:#000;font-family:'Liberation Sans';letter-spacing:-0.24px;">Rateio no Campo Desc.</span>
<div style="left:816px;top:288px;width:145px;height:22px;border:1px solid #d5dde3;border-radius:3px"></div>
<div style="left:822px;top:281px;width:53px;height:13px;background:#fff"></div>
<span id="t119" class="t" style="left:824px;top:282px;font-size:11px;line-height:13px;font-weight:400;color:#000;font-family:'Liberation Sans';letter-spacing:-0.40px;">Retem ISS</span>
<svg style="position:absolute;left:824px;top:294px" width="13" height="13"><circle cx="6.5" cy="6.5" r="5.6" fill="#fff" stroke="#6a6a6a" stroke-width="1"/></svg>
<span id="t120" class="t" style="left:841px;top:295px;font-size:11px;line-height:13px;font-weight:400;color:#000;font-family:'Liberation Sans';letter-spacing:-0.48px;">Sim</span>
<svg style="position:absolute;left:890px;top:294px" width="13" height="13"><circle cx="6.5" cy="6.5" r="5.6" fill="#fff" stroke="#6a6a6a" stroke-width="1"/></svg>
<span id="t121" class="t" style="left:907px;top:295px;font-size:11px;line-height:13px;font-weight:400;color:#000;font-family:'Liberation Sans';letter-spacing:0.41px;">Não</span>
<div style="left:816px;top:316px;width:13px;height:13px;background:#fff;border:1px solid #707070"></div>
<svg style="position:absolute;left:816px;top:316px" width="13" height="13"><path d="M2.5 6.5 L5 9.5 L10.5 3" stroke="#1a1a1a" stroke-width="2.4" fill="none"/></svg>
<span id="t122" class="t" style="left:832px;top:316px;font-size:11px;line-height:13px;font-weight:400;color:#000;font-family:'Liberation Sans';letter-spacing:-0.04px;">Aceita Pendência</span>
<div style="left:813px;top:330px;width:203px;height:1px;background:#a0a0a0"></div>
<div style="left:816px;top:334px;width:13px;height:13px;background:#fff;border:1px solid #707070"></div>
<span id="t123" class="t" style="left:832px;top:334px;font-size:11px;line-height:13px;font-weight:400;color:#000;font-family:'Liberation Sans';letter-spacing:-0.17px;">Integra IPI na B.C. de ICMS</span>
<div style="left:816px;top:347px;width:13px;height:13px;background:#fff;border:1px solid #707070"></div>
<span id="t124" class="t" style="left:832px;top:347px;font-size:11px;line-height:13px;font-weight:400;color:#000;font-family:'Liberation Sans';letter-spacing:-0.23px;">Integra Frete na B.C. de ICMS</span>
<div style="left:816px;top:360px;width:13px;height:13px;background:#fff;border:1px solid #707070"></div>
<svg style="position:absolute;left:816px;top:360px" width="13" height="13"><path d="M2.5 6.5 L5 9.5 L10.5 3" stroke="#1a1a1a" stroke-width="2.4" fill="none"/></svg>
<span id="t125" class="t" style="left:832px;top:360px;font-size:11px;line-height:13px;font-weight:400;color:#000;font-family:'Liberation Sans';letter-spacing:-0.22px;">Integra Seguro na B.C. de ICMS</span>
<div style="left:812px;top:374px;width:203px;height:1px;background:#a0a0a0"></div>
<div style="left:816px;top:382px;width:13px;height:13px;background:#fff;border:1px solid #707070"></div>
<span id="t126" class="t" style="left:832px;top:382px;font-size:11px;line-height:13px;font-weight:400;color:#000;font-family:'Liberation Sans';letter-spacing:-0.22px;">Integra IPI na B.C. de ICMS ST</span>
<div style="left:816px;top:396px;width:13px;height:13px;background:#fff;border:1px solid #707070"></div>
<span id="t127" class="t" style="left:832px;top:396px;font-size:11px;line-height:13px;font-weight:400;color:#000;font-family:'Liberation Sans';letter-spacing:-0.25px;">Integra Frete na B.C. de ICMS ST</span>
<div style="left:816px;top:410px;width:13px;height:13px;background:#fff;border:1px solid #707070"></div>
<svg style="position:absolute;left:816px;top:410px" width="13" height="13"><path d="M2.5 6.5 L5 9.5 L10.5 3" stroke="#1a1a1a" stroke-width="2.4" fill="none"/></svg>
<span id="t128" class="t" style="left:832px;top:410px;font-size:11px;line-height:13px;font-weight:400;color:#000;font-family:'Liberation Sans';letter-spacing:-0.23px;">Integra Seguro na B.C. de ICMS ST</span>
<div style="left:813px;top:426px;width:203px;height:1px;background:#a0a0a0"></div>
<div style="left:816px;top:432px;width:13px;height:13px;background:#fff;border:1px solid #707070"></div>
<svg style="position:absolute;left:816px;top:432px" width="13" height="13"><path d="M2.5 6.5 L5 9.5 L10.5 3" stroke="#1a1a1a" stroke-width="2.4" fill="none"/></svg>
<span id="t129" class="t" style="left:832px;top:432px;font-size:11px;line-height:13px;font-weight:400;color:#000;font-family:'Liberation Sans';letter-spacing:-0.23px;">Aproveita Crédito SN</span>
<div style="left:816px;top:447px;width:13px;height:13px;background:#fff;border:1px solid #707070"></div>
<div style="left:820px;top:451px;width:5px;height:5px;background:#1a1a1a"></div>
<span id="t130" class="t" style="left:832px;top:447px;font-size:11px;line-height:13px;font-weight:400;color:#000;font-family:'Liberation Sans';letter-spacing:-0.21px;">Não Calcular INSS</span>
<div style="left:816px;top:462px;width:13px;height:13px;background:#fff;border:1px solid #707070"></div>
<span id="t131" class="t" style="left:832px;top:462px;font-size:11px;line-height:13px;font-weight:400;color:#000;font-family:'Liberation Sans';letter-spacing:-0.27px;">Cobrança Somente E-mail</span>
<div style="left:9px;top:683px;width:1012px;height:19px;background:#f0f0f0"></div>
<div style="left:10px;top:684px;width:855px;height:18px;background:#fff;border-top:1px solid #a0a0a0;border-bottom:2px solid #a0a0a0;border-left:1px solid #a0a0a0"></div>
<div style="left:159px;top:685px;width:1px;height:15px;background:#d8d8d8"></div>
<span id="t132" class="t" style="left:165px;top:687px;font-size:12px;line-height:14px;font-weight:400;color:#111;font-family:'Liberation Sans';letter-spacing:-0.23px;">| Shift+Esc - Cancelar |  F2-Incluir | F3-Excluir | F4-Salvar | F5-Localizar | Shift + F6-Consulta log | F9-Sair |</span>
<div style="left:864px;top:684px;width:157px;height:18px;background:#f0f0f0;border-top:1px solid #a0a0a0;border-bottom:2px solid #a0a0a0;border-right:1px solid #a0a0a0;border-left:1px solid #d8d8d8"></div>
<span id="t133" class="t" style="left:867px;top:685px;font-size:13px;line-height:15px;font-weight:700;color:#111;font-family:'Liberation Sans';letter-spacing:0.31px;">Base Conhecimento</span>
<svg style="position:absolute;left:1001px;top:687px" width="17" height="13"><rect x="0" y="2" width="17" height="9" fill="#4a6670"/><rect x="2" y="0" width="6" height="10" fill="#a8bcc4"/><rect x="9" y="0" width="6" height="10" fill="#a8bcc4"/><g fill="#e8f0f4"><rect x="3" y="3" width="4" height="1"/><rect x="3" y="5" width="4" height="1"/><rect x="3" y="7" width="4" height="1"/><rect x="10" y="3" width="4" height="1"/><rect x="10" y="5" width="4" height="1"/><rect x="10" y="7" width="4" height="1"/></g><rect x="7" y="11" width="3" height="2" fill="#4a6670"/></svg>
</body></html>
